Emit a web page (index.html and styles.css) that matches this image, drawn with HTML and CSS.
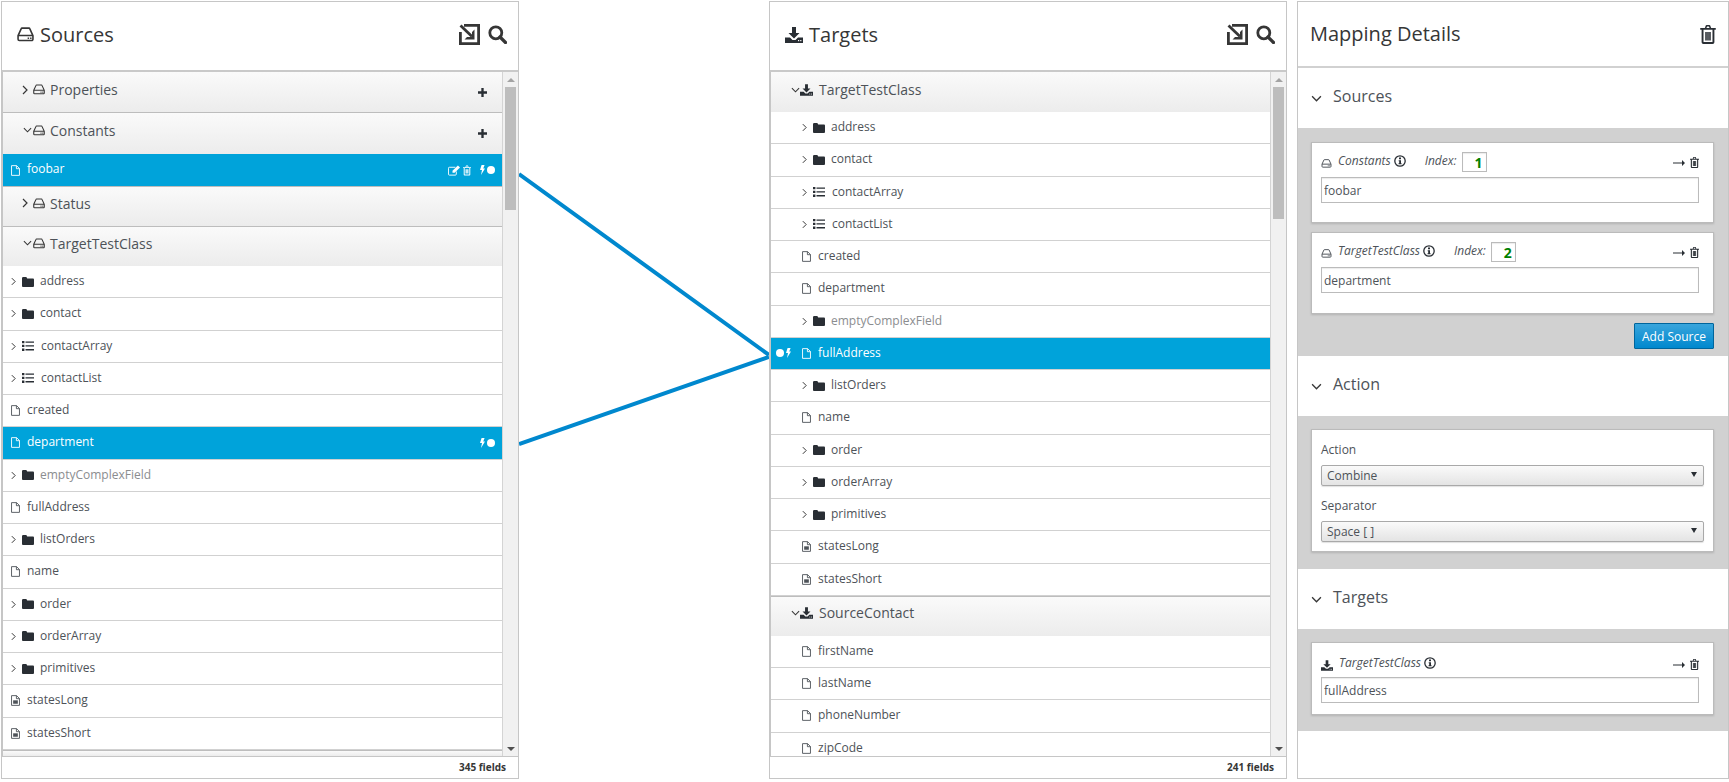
FILE: index.html
```html
<!DOCTYPE html>
<html lang="en">
<head>
<meta charset="utf-8">
<title>Data Mapper</title>
<link rel="stylesheet" href="styles.css">
</head>
<body>
<svg class="sprite" aria-hidden="true">
  <symbol id="i-hdd" viewBox="0 0 16 14"><path d="M1 8 4 1.500a.8.8 0 0 1 .7-.5h6.600a.8.8 0 0 1 .7.5L15 8v3.500a1.200 1.200 0 0 1-1.200 1.200H2.200A1.200 1.200 0 0 1 1 11.500zM1 8h14" fill="none" stroke="currentColor" stroke-width="1.500"/><rect x="10" y="9.800" width="1.400" height="1.400" fill="currentColor"/><rect x="12.300" y="9.800" width="1.400" height="1.400" fill="currentColor"/></symbol>
  <symbol id="i-dl" viewBox="0 0 18 16"><path d="M7 0h4v6h3.500L9 11.500 3.500 6H7z" fill="currentColor"/><path d="M0 10.500h5L7.500 13h3L13 10.500h5V16H0z" fill="currentColor"/><rect x="13" y="13" width="1.200" height="1.200" fill="#fff"/><rect x="15.200" y="13" width="1.200" height="1.200" fill="#fff"/></symbol>
  <symbol id="i-file" viewBox="0 0 10 12"><path d="M.6.6h5.600l3.200 3.200v7.600H.6zM6 .6v3.400h3.400" fill="none" stroke="currentColor" stroke-width="1"/></symbol>
  <symbol id="i-filetext" viewBox="0 0 10 12"><path d="M.6.6h5.600l3.200 3.200v7.600H.6zM6 .6v3.400h3.400" fill="none" stroke="currentColor" stroke-width="1"/><rect x="2.400" y="5.800" width="5.200" height="3.800" fill="currentColor"/></symbol>
  <symbol id="i-folder" viewBox="0 0 12 10"><path d="M0 1.300C0 .6.500 0 1.200 0h2.600c.5 0 .8.200 1 .6l.4.800h5.600c.7 0 1.200.5 1.200 1.200v6.100c0 .7-.5 1.300-1.200 1.300H1.200C.5 10 0 9.400 0 8.700z" fill="currentColor"/></symbol>
  <symbol id="i-list" viewBox="0 0 12 10"><path d="M0 0h2.400v2.300H0zM0 3.800h2.400v2.300H0zM0 7.600h2.400v2.300H0zM3.500.4H12v1.400H3.500zM3.500 4.200H12v1.400H3.500zM3.500 8H12v1.400H3.500z" fill="currentColor"/></symbol>
  <symbol id="i-right" viewBox="0 0 6 10"><path d="M1 1l4 4-4 4" fill="none" stroke="currentColor" stroke-width="1.200"/></symbol>
  <symbol id="i-down" viewBox="0 0 10 6"><path d="M1 1l4 4 4-4" fill="none" stroke="currentColor" stroke-width="1.200"/></symbol>
  <symbol id="i-plus" viewBox="0 0 10 10"><path d="M3.700 0h2.600v3.700H10v2.600H6.300V10H3.700V6.300H0V3.700h3.700z" fill="currentColor"/></symbol>
  <symbol id="i-edit" viewBox="0 0 13 11"><path d="M9 6.500v3a1 1 0 0 1-1 1H1.500a1 1 0 0 1-1-1V3a1 1 0 0 1 1-1H8" fill="none" stroke="currentColor" stroke-width="1"/><path d="M10.700 0 13 2.200 7.200 8H4.900V5.800z" fill="currentColor"/></symbol>
  <symbol id="i-trash" viewBox="0 0 9 11"><path d="M0 1.800h9v1H8.200V10a1 1 0 0 1-1 1H1.800a1 1 0 0 1-1-1V2.800H0zM2.700 1.800 3.200.3C3.300.1 3.500 0 3.700 0h1.600c.2 0 .4.100.5.300l.5 1.500H5.400L5 .8H4L3.600 1.800zM1.900 2.800V9.900h5.200V2.800z" fill="currentColor"/><path d="M2.900 4h.9v5h-.9zM4.050 4h.9v5h-.9zM5.200 4h.9v5h-.9z" fill="currentColor"/></symbol>
  <symbol id="i-bolt" viewBox="0 0 5 10"><path d="M1.600 0H4.600L3.200 3.500H5L1 10l1-5H0z" fill="currentColor"/></symbol>
  <symbol id="i-search" viewBox="0 0 19 19"><circle cx="7.800" cy="7.800" r="6" fill="none" stroke="currentColor" stroke-width="2.800"/><path d="M12 12l5.500 5.500" stroke="currentColor" stroke-width="3.200" stroke-linecap="round"/></symbol>
  <symbol id="i-map" viewBox="0 0 21 21"><path d="M5 1.400h14.600v18.200H1.400V8" fill="none" stroke="currentColor" stroke-width="2.800"/><path d="M1.500 1.500 13 12.500" stroke="currentColor" stroke-width="2.800"/><path d="M15.500 5.500v10h-10l2.500-2.600h5V8z" fill="currentColor"/></symbol>
  <symbol id="i-info" viewBox="0 0 12 12"><circle cx="6" cy="6" r="5.200" fill="none" stroke="currentColor" stroke-width="1.300"/><path d="M5 2.600h2v1.700H5zM4.700 5.200h2.300v3h.6v1H4.500v-1h.7V6.200h-.5z" fill="currentColor"/></symbol>
  <symbol id="i-arrow" viewBox="0 0 12 6"><path d="M0 2.500h9V0l3 3-3 3V3.500H0z" fill="currentColor"/></symbol>
</svg>

<main class="app">
  <section class="panel panel-source">
    <header class="panel-head">
      <svg class="ic-title-hdd"><use href="#i-hdd"/></svg>
      <h1 class="title">Sources</h1>
      <svg class="ic-map"><use href="#i-map"/></svg>
      <svg class="ic-search"><use href="#i-search"/></svg>
    </header>
    <div class="scroller">
      <div class="list">
        <div class="sec-head sec-first"><svg class="ic-right"><use href="#i-right"/></svg><svg class="ic-hdd"><use href="#i-hdd"/></svg><span>Properties</span><svg class="ic-plus"><use href="#i-plus"/></svg></div>
        <div class="sec-head sec-open sec-after-first"><svg class="ic-down"><use href="#i-down"/></svg><svg class="ic-hdd"><use href="#i-hdd"/></svg><span>Constants</span><svg class="ic-plus"><use href="#i-plus"/></svg></div>
        <div class="row row-sel row-foobar"><svg class="ic-file"><use href="#i-file"/></svg><span>foobar</span>
          <span class="row-tools"><svg class="ic-edit"><use href="#i-edit"/></svg><svg class="ic-tool-trash"><use href="#i-trash"/></svg><svg class="ic-bolt"><use href="#i-bolt"/></svg><i class="dot"></i></span></div>
        <div class="sec-head sec-mid"><svg class="ic-right"><use href="#i-right"/></svg><svg class="ic-hdd"><use href="#i-hdd"/></svg><span>Status</span></div>
        <div class="sec-head sec-open sec-mid"><svg class="ic-down"><use href="#i-down"/></svg><svg class="ic-hdd"><use href="#i-hdd"/></svg><span>TargetTestClass</span></div>
        <div class="row"><svg class="ic-right-sm"><use href="#i-right"/></svg><svg class="ic-folder"><use href="#i-folder"/></svg><span>address</span></div>
        <div class="row"><svg class="ic-right-sm"><use href="#i-right"/></svg><svg class="ic-folder"><use href="#i-folder"/></svg><span>contact</span></div>
        <div class="row"><svg class="ic-right-sm"><use href="#i-right"/></svg><svg class="ic-list"><use href="#i-list"/></svg><span>contactArray</span></div>
        <div class="row"><svg class="ic-right-sm"><use href="#i-right"/></svg><svg class="ic-list"><use href="#i-list"/></svg><span>contactList</span></div>
        <div class="row"><svg class="ic-file"><use href="#i-file"/></svg><span>created</span></div>
        <div class="row row-sel"><svg class="ic-file"><use href="#i-file"/></svg><span>department</span>
          <span class="row-tools"><svg class="ic-bolt"><use href="#i-bolt"/></svg><i class="dot"></i></span></div>
        <div class="row row-muted"><svg class="ic-right-sm"><use href="#i-right"/></svg><svg class="ic-folder"><use href="#i-folder"/></svg><span>emptyComplexField</span></div>
        <div class="row"><svg class="ic-file"><use href="#i-file"/></svg><span>fullAddress</span></div>
        <div class="row"><svg class="ic-right-sm"><use href="#i-right"/></svg><svg class="ic-folder"><use href="#i-folder"/></svg><span>listOrders</span></div>
        <div class="row"><svg class="ic-file"><use href="#i-file"/></svg><span>name</span></div>
        <div class="row"><svg class="ic-right-sm"><use href="#i-right"/></svg><svg class="ic-folder"><use href="#i-folder"/></svg><span>order</span></div>
        <div class="row"><svg class="ic-right-sm"><use href="#i-right"/></svg><svg class="ic-folder"><use href="#i-folder"/></svg><span>orderArray</span></div>
        <div class="row"><svg class="ic-right-sm"><use href="#i-right"/></svg><svg class="ic-folder"><use href="#i-folder"/></svg><span>primitives</span></div>
        <div class="row"><svg class="ic-file"><use href="#i-filetext"/></svg><span>statesLong</span></div>
        <div class="row"><svg class="ic-file"><use href="#i-filetext"/></svg><span>statesShort</span></div>
        <div class="sec-head sec-last"></div>
      </div>
      <div class="scrollbar">
        <i class="sb-up"></i>
        <i class="sb-thumb sb-thumb-source"></i>
        <i class="sb-down"></i>
      </div>
    </div>
    <footer class="panel-foot">345 fields</footer>
  </section>

  <svg class="lines" viewBox="0 0 250 782" aria-hidden="true">
    <path d="M0 174 250 355M0 444 250 357"/>
  </svg>

  <section class="panel panel-target">
    <header class="panel-head">
      <svg class="ic-title-dl"><use href="#i-dl"/></svg>
      <h1 class="title">Targets</h1>
      <svg class="ic-map"><use href="#i-map"/></svg>
      <svg class="ic-search"><use href="#i-search"/></svg>
    </header>
    <div class="scroller">
      <div class="list list-target">
        <div class="sec-head sec-first-open"><svg class="ic-down"><use href="#i-down"/></svg><svg class="ic-dl"><use href="#i-dl"/></svg><span>TargetTestClass</span></div>
        <div class="row"><svg class="ic-right-sm"><use href="#i-right"/></svg><svg class="ic-folder"><use href="#i-folder"/></svg><span>address</span></div>
        <div class="row"><svg class="ic-right-sm"><use href="#i-right"/></svg><svg class="ic-folder"><use href="#i-folder"/></svg><span>contact</span></div>
        <div class="row"><svg class="ic-right-sm"><use href="#i-right"/></svg><svg class="ic-list"><use href="#i-list"/></svg><span>contactArray</span></div>
        <div class="row"><svg class="ic-right-sm"><use href="#i-right"/></svg><svg class="ic-list"><use href="#i-list"/></svg><span>contactList</span></div>
        <div class="row"><svg class="ic-file"><use href="#i-file"/></svg><span>created</span></div>
        <div class="row"><svg class="ic-file"><use href="#i-file"/></svg><span>department</span></div>
        <div class="row row-muted"><svg class="ic-right-sm"><use href="#i-right"/></svg><svg class="ic-folder"><use href="#i-folder"/></svg><span>emptyComplexField</span></div>
        <div class="row row-sel row-mapped"><span class="row-lead"><i class="dot"></i><svg class="ic-bolt"><use href="#i-bolt"/></svg></span><svg class="ic-file"><use href="#i-file"/></svg><span>fullAddress</span></div>
        <div class="row"><svg class="ic-right-sm"><use href="#i-right"/></svg><svg class="ic-folder"><use href="#i-folder"/></svg><span>listOrders</span></div>
        <div class="row"><svg class="ic-file"><use href="#i-file"/></svg><span>name</span></div>
        <div class="row"><svg class="ic-right-sm"><use href="#i-right"/></svg><svg class="ic-folder"><use href="#i-folder"/></svg><span>order</span></div>
        <div class="row"><svg class="ic-right-sm"><use href="#i-right"/></svg><svg class="ic-folder"><use href="#i-folder"/></svg><span>orderArray</span></div>
        <div class="row"><svg class="ic-right-sm"><use href="#i-right"/></svg><svg class="ic-folder"><use href="#i-folder"/></svg><span>primitives</span></div>
        <div class="row"><svg class="ic-file"><use href="#i-filetext"/></svg><span>statesLong</span></div>
        <div class="row"><svg class="ic-file"><use href="#i-filetext"/></svg><span>statesShort</span></div>
        <div class="sec-head sec-open sec-mid"><svg class="ic-down"><use href="#i-down"/></svg><svg class="ic-dl"><use href="#i-dl"/></svg><span>SourceContact</span></div>
        <div class="row"><svg class="ic-file"><use href="#i-file"/></svg><span>firstName</span></div>
        <div class="row"><svg class="ic-file"><use href="#i-file"/></svg><span>lastName</span></div>
        <div class="row"><svg class="ic-file"><use href="#i-file"/></svg><span>phoneNumber</span></div>
        <div class="row"><svg class="ic-file"><use href="#i-file"/></svg><span>zipCode</span></div>
      </div>
      <div class="scrollbar">
        <i class="sb-up"></i>
        <i class="sb-thumb sb-thumb-target"></i>
        <i class="sb-down"></i>
      </div>
    </div>
    <footer class="panel-foot">241 fields</footer>
  </section>

  <aside class="details">
    <header class="details-head">
      <h1 class="title">Mapping Details</h1>
      <svg class="ic-head-trash"><use href="#i-trash"/></svg>
    </header>

    <div class="d-head"><svg class="ic-d-down"><use href="#i-down"/></svg><h2>Sources</h2></div>
    <div class="d-body d-body-sources">
      <div class="card">
        <div class="card-row">
          <svg class="ic-card-hdd"><use href="#i-hdd"/></svg>
          <em class="doc-name">Constants</em>
          <svg class="ic-info"><use href="#i-info"/></svg>
          <em class="index-label">Index:</em>
          <span class="index-box">1</span>
          <svg class="ic-arrow"><use href="#i-arrow"/></svg>
          <svg class="ic-card-trash"><use href="#i-trash"/></svg>
        </div>
        <input class="field-input" value="foobar">
      </div>
      <div class="card card-second">
        <div class="card-row">
          <svg class="ic-card-hdd"><use href="#i-hdd"/></svg>
          <em class="doc-name">TargetTestClass</em>
          <svg class="ic-info"><use href="#i-info"/></svg>
          <em class="index-label">Index:</em>
          <span class="index-box">2</span>
          <svg class="ic-arrow"><use href="#i-arrow"/></svg>
          <svg class="ic-card-trash"><use href="#i-trash"/></svg>
        </div>
        <input class="field-input" value="department">
      </div>
      <button class="btn-add" type="button">Add Source</button>
    </div>

    <div class="d-head"><svg class="ic-d-down"><use href="#i-down"/></svg><h2>Action</h2></div>
    <div class="d-body d-body-action">
      <div class="card card-action">
        <label class="sel-label">Action</label>
        <div class="sel-wrap"><select class="sel"><option>Combine</option></select></div>
        <label class="sel-label sel-label-2">Separator</label>
        <div class="sel-wrap"><select class="sel"><option>Space [ ]</option></select></div>
      </div>
    </div>

    <div class="d-head"><svg class="ic-d-down"><use href="#i-down"/></svg><h2>Targets</h2></div>
    <div class="d-body d-body-targets">
      <div class="card card-target">
        <div class="card-row card-row-target">
          <svg class="ic-card-dl"><use href="#i-dl"/></svg>
          <em class="doc-name">TargetTestClass</em>
          <svg class="ic-info"><use href="#i-info"/></svg>
          <svg class="ic-arrow"><use href="#i-arrow"/></svg>
          <svg class="ic-card-trash"><use href="#i-trash"/></svg>
        </div>
        <input class="field-input" value="fullAddress">
      </div>
    </div>
  </aside>
</main>
</body>
</html>
```

FILE: styles.css
```css
* { box-sizing: border-box; }
html, body { margin: 0; padding: 0; background: #fff; }
body { font-family: "Open Sans", "Noto Sans", sans-serif; font-size: 12px; color: #4d5258; overflow: hidden; }
.sprite { position: absolute; width: 0; height: 0; overflow: hidden; }
svg { display: block; flex: none; }

.app { display: flex; height: 779px; margin: 1px 0 0 1px; }

.panel { display: flex; flex-direction: column; width: 518px; height: 778px; border: 1px solid #c6c6c6; flex: none; }
.lines { width: 250px; height: 782px; margin-top: -1px; flex: none; }
.lines path { fill: none; stroke: #0088ce; stroke-width: 4px; }

.panel-head { height: 70px; display: flex; align-items: center; padding: 0 11px 3px 15px; border-bottom: 2px solid #c9c9c9; flex: none; }
.title { margin: 0; font-size: 20px; font-weight: 400; line-height: 26px; color: #363636; }
.ic-title-hdd { width: 17px; height: 15px; margin-right: 6px; color: #363636; }
.ic-title-dl { width: 18px; height: 16px; margin-right: 6px; color: #292e34; }
.ic-map { width: 21px; height: 21px; margin-left: auto; color: #363636; }
.ic-search { width: 19px; height: 19px; margin-left: 8px; color: #363636; }

.scroller { flex: 1; min-height: 0; display: flex; overflow: hidden; }
.list { flex: 1; min-width: 0; overflow: hidden; border-left: 1px solid #c6c6c6; border-right: 1px solid #d4d4d4; }

.sec-head { display: flex; align-items: center; height: 40px; padding: 0 0 7px 19px; background: linear-gradient(#fafafa, #ececec); border-top: 1px solid #bdbdbd; font-size: 14px; color: #4d5258; }
.sec-first { border-top: none; height: 41px; padding-bottom: 5px; border-bottom: 1px solid #bdbdbd; }
.sec-first-open { border-top: none; height: 40px; padding-bottom: 5px; }
.sec-after-first { height: 41px; border-top: none; }
.sec-last { height: 6px; padding: 0; }
.ic-right { width: 6px; height: 10px; margin-right: 5px; color: #363636; }
.ic-down { width: 9px; height: 6px; margin: 0 1px; color: #363636; }
.ic-hdd { width: 12px; height: 11px; margin-right: 5px; color: #363636; }
.ic-dl { width: 13px; height: 12px; margin: 0 6px 0 -1px; color: #292e34; }
.ic-plus { width: 9px; height: 9px; margin: 5px 15px 0 auto; color: #292e34; }
.sec-open .ic-plus { margin-top: 7px; }

.row { display: flex; align-items: center; height: 32.25px; padding-left: 8px; border-bottom: 1px solid #d1d1d1; background: #fff; position: relative; }
.row > span { margin-bottom: 2px; }
.list-target .row { padding-left: 31px; }
.row-muted { color: #8b8d8f; }
.row-sel { background: #00a3da; color: #fff; }
.row-foobar { height: 32px; border-bottom: none; }
.row-foobar > span { margin-bottom: 4px; }
.ic-file { width: 9px; height: 11px; margin-right: 7px; color: #4d5258; }
.row-sel .ic-file { color: #fff; }
.ic-right-sm { width: 5px; height: 9px; margin-right: 6px; color: #363636; }
.ic-folder { width: 12px; height: 10px; margin-right: 6px; color: #292e34; }
.ic-list { width: 12px; height: 10px; margin-right: 7px; color: #292e34; }

.row > .row-tools { margin: 0 7px 0 auto; display: flex; align-items: center; }
.ic-edit { width: 12px; height: 11px; margin-right: 3px; }
.ic-tool-trash { width: 8px; height: 11px; margin-right: 9px; }
.ic-bolt { width: 5px; height: 10px; margin-right: 2px; }
.dot { display: block; width: 8px; height: 8px; border-radius: 50%; background: #fff; }
.row > .row-lead { position: absolute; left: 5px; top: 10px; margin: 0; display: flex; align-items: center; }
.row-lead .dot { margin-right: 2px; }
.row-lead .ic-bolt { margin-right: 0; }

.scrollbar { width: 15px; flex: none; background: #f1f1f1; display: flex; flex-direction: column; align-items: center; padding-top: 6px; }
.sb-up { width: 0; height: 0; border: 4px solid transparent; border-top: 0; border-bottom: 4px solid #a3a3a3; }
.sb-down { width: 0; height: 0; margin-top: auto; margin-bottom: 5px; border: 4px solid transparent; border-bottom: 0; border-top: 4px solid #505050; }
.sb-thumb { width: 11px; margin-top: 5px; background: #bdbdbd; }
.sb-thumb-source { height: 123px; }
.sb-thumb-target { height: 132px; }

.panel-foot { height: 22px; flex: none; border-top: 1px solid #c6c6c6; padding-right: 12px; text-align: right; font-size: 10px; font-weight: 700; line-height: 21px; color: #363636; }

.details { margin-left: 10px; width: 432px; height: 778px; flex: none; border: 1px solid #c6c6c6; display: flex; flex-direction: column; }
.details-head { height: 66px; border-bottom: 2px solid #d1d1d1; display: flex; align-items: center; justify-content: space-between; padding: 0 12px 0 12px; flex: none; }
.ic-head-trash { width: 16px; height: 19px; color: #292e34; }

.d-head { height: 60px; display: flex; align-items: center; padding: 0 0 5px 13px; flex: none; }
.d-head h2 { margin: 0; font-size: 16px; font-weight: 400; color: #4d5258; }
.ic-d-down { width: 11px; height: 7px; margin: 5px 11px 0 0; color: #363636; }

.d-body { background: #d1d1d1; padding: 14px 14px 7px 13px; display: flex; flex-direction: column; flex: none; }
.d-body-action { padding-top: 13px; padding-bottom: 17px; }
.d-body-targets { padding-top: 13px; padding-bottom: 16px; }
.card { background: #fff; border: 1px solid #bbb; box-shadow: 0 1px 2px rgba(0,0,0,.15); padding: 9px 14px 19px 9px; margin-bottom: 9px; }
.card-second { padding-bottom: 20px; }
.d-body-action .card, .d-body-targets .card { margin-bottom: 0; }
.card-row { display: flex; align-items: center; height: 20px; margin-bottom: 5px; }
.ic-card-hdd { width: 11px; height: 9px; margin: 3px 6px 0 0; color: #4d5258; }
.ic-card-dl { width: 12px; height: 11px; margin: 3px 6px 0 0; color: #292e34; }
.doc-name { font-style: italic; margin-top: -3px; }
.ic-info { width: 12px; height: 12px; margin: -2px 0 0 3px; color: #292e34; }
.index-label { font-style: italic; margin: -3px 0 0 19px; }
.index-box { width: 25px; height: 20px; margin-left: 5px; border: 1px solid #bbb; box-shadow: inset 0 1px 1px rgba(0,0,0,.08); color: #008000; font-size: 14px; font-weight: 700; line-height: 19px; text-align: right; padding-right: 3px; }
.ic-arrow { width: 12px; height: 6px; margin: 1px 0 0 auto; color: #292e34; }
.ic-card-trash { width: 9px; height: 11px; margin: 1px 0 0 5px; color: #292e34; }
.field-input { display: block; width: 100%; height: 26px; border: 1px solid #bbb; box-shadow: inset 0 1px 1px rgba(0,0,0,.08); padding: 0 2px; font: 12px "Open Sans", "Noto Sans", sans-serif; color: #4d5258; background: #fff; outline: none; }
.card-target { height: 73px; padding-bottom: 0; }
.card-row-target { height: 26px; margin: -1px 0 0; }

.btn-add { align-self: flex-end; margin-top: 0; width: 80px; height: 26px; padding: 0; border: 1px solid #00659c; border-radius: 1px; background: linear-gradient(#39a5dc, #0088ce); color: #fff; font: 12px "Open Sans", "Noto Sans", sans-serif; }

.card-action { height: 123px; padding: 10px 9px 0; }
.sel-label { display: block; line-height: 20px; height: 20px; margin-bottom: 5px; }
.sel-label-2 { margin-top: 10px; }
.sel-wrap { position: relative; }
.sel-wrap::after { content: ""; position: absolute; right: 7px; top: 7px; border: 3px solid transparent; border-top: 5px solid #292e34; border-bottom: 0; }
.sel { display: block; width: 100%; height: 21px; padding: 0 5px; appearance: none; -webkit-appearance: none; border: 1px solid #a9a9a9; border-radius: 2px; background: linear-gradient(#fafafa, #e4e4e4); font: 12px "Open Sans", "Noto Sans", sans-serif; color: #4d5258; box-shadow: 0 1px 1px rgba(0,0,0,.12); outline: none; }
```
